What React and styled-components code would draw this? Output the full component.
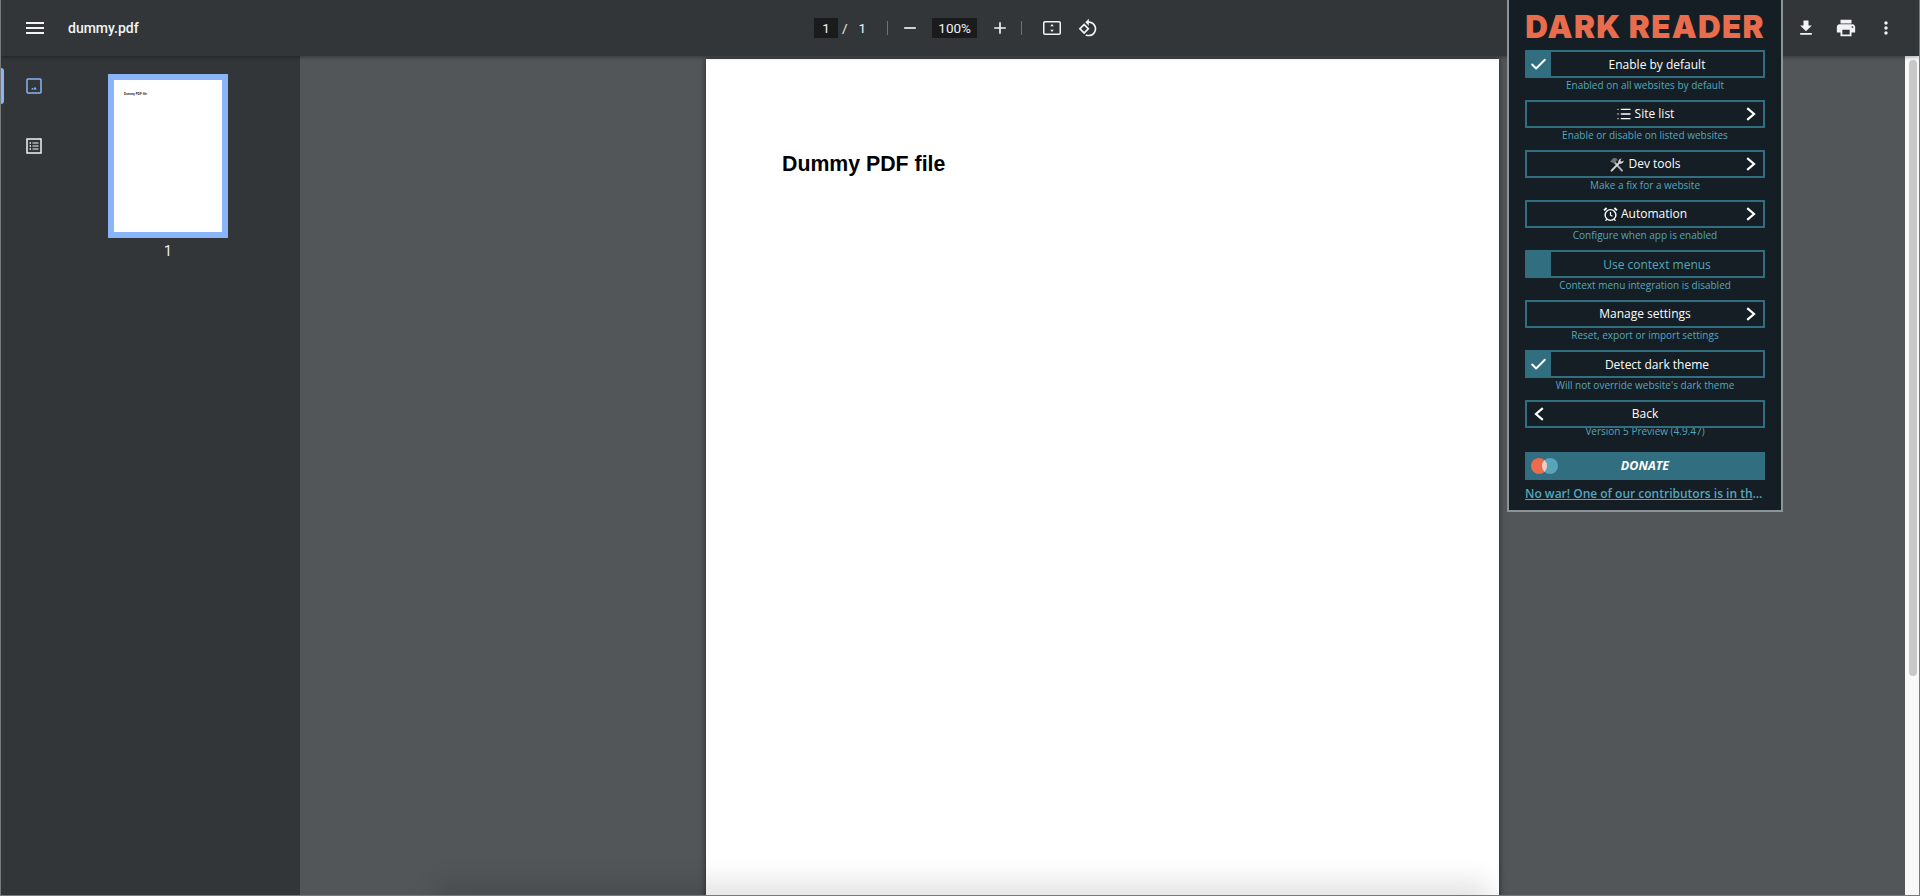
import React from "react";
import styled, { createGlobalStyle } from "styled-components";
import { Check, List } from "lucide-react";

const GlobalStyle = createGlobalStyle`
  html, body { margin: 0; padding: 0; height: 100%; overflow: hidden; background: #525659; }
  * { box-sizing: border-box; }
`;

const Frame = styled.div`
  position: relative;
  width: 1920px;
  height: 896px;
  display: flex;
  flex-direction: column;
  overflow: hidden;
  border-left: 1px solid #77797b;
  border-right: 1px solid #77797b;
  border-bottom: 1px solid #77797b;
  font-family: Roboto, "Liberation Sans", sans-serif;
  color: #f1f3f4;
`;

const Toolbar = styled.header`
  position: relative;
  z-index: 2;
  flex: 0 0 56px;
  display: grid;
  grid-template-columns: 813px auto 1fr;
  align-items: center;
  background: #323639;
  box-shadow: 0 1px 4px rgba(0, 0, 0, 0.35);
`;

const ToolbarLeft = styled.div`
  display: flex;
  align-items: center;
  padding-left: 22px;
  gap: 21px;
`;

const FileName = styled.span`
  font-size: 14px;
  font-weight: 500;
  line-height: 20px;
`;

const ToolbarCenter = styled.div`
  display: flex;
  align-items: center;
`;

const ToolbarRight = styled.div`
  display: flex;
  align-items: center;
  justify-content: flex-end;
  padding-right: 21px;
  gap: 16px;
`;

const ToolButton = styled.span`
  display: flex;
  align-items: center;
  justify-content: center;
  width: ${(p) => p.$w || 24}px;
  height: 24px;
  margin-left: ${(p) => p.$ml || 0}px;
  color: #f1f3f4;
`;

const NumberBox = styled.span`
  display: flex;
  align-items: center;
  justify-content: center;
  width: ${(p) => p.$w}px;
  height: 20px;
  margin-left: ${(p) => p.$ml || 0}px;
  background: #191b1c;
  font-size: 13.5px;
  font-weight: 400;
`;

const PageCount = styled.span`
  font-size: 13.5px;
  font-weight: 400;
  margin-left: ${(p) => p.$ml}px;
`;

const Divider = styled.span`
  width: 1px;
  height: 14px;
  margin-left: ${(p) => p.$ml}px;
  background: #6f7376;
`;

const Body = styled.div`
  flex: 1;
  display: flex;
  min-height: 0;
`;

const Sidebar = styled.aside`
  flex: 0 0 299px;
  display: flex;
  background: #323639;
`;

const SideTabs = styled.nav`
  flex: 0 0 68px;
  display: flex;
  flex-direction: column;
  padding-top: 12px;
  gap: 24px;
`;

const SideTab = styled.div`
  position: relative;
  height: 36px;
  padding-left: 25px;
  display: flex;
  align-items: center;
  color: ${(p) => (p.$active ? "#8ab4f8" : "#f1f3f4")};

  &::before {
    content: "";
    display: ${(p) => (p.$active ? "block" : "none")};
    position: absolute;
    left: 0;
    top: 0;
    width: 3px;
    height: 36px;
    border-radius: 0 3px 3px 0;
    background: #8ab4f8;
  }
`;

const ThumbColumn = styled.div`
  padding: 18px 0 0 39px;
`;

const Thumb = styled.div`
  width: 120px;
  height: 164px;
  border: 6px solid #8ab4f8;
  background: #fff;
  padding: 12px 0 0 10px;
`;

const ThumbTitle = styled.div`
  font-family: "Liberation Sans", Arial, sans-serif;
  font-size: 3px;
  font-weight: 700;
  line-height: 4px;
  color: #111;
  white-space: nowrap;
`;

const ThumbNumber = styled.div`
  width: 120px;
  margin-top: 5px;
  text-align: center;
  font-size: 14px;
  font-weight: 400;
  line-height: 16px;
`;

const Viewer = styled.main`
  position: relative;
  flex: 1;
  display: flex;
  overflow: hidden;
  background: #525659;
  padding: 3px 0 0 406px;
`;

const Sheet = styled.div`
  width: 793px;
  height: 1122px;
  flex: none;
  background: #fff;
  padding: 93px 0 0 76px;
  box-shadow: 0 0 6px rgba(0, 0, 0, 0.55);
`;

const SheetTitle = styled.h1`
  margin: 0;
  font-family: "Liberation Sans", Arial, sans-serif;
  font-size: 21.3px;
  line-height: 24px;
  font-weight: 700;
  color: #000;
`;

/* soft shadow rising from below the window edge */
const BottomFade = styled.div`
  position: absolute;
  left: 150px;
  width: 1025px;
  bottom: -14px;
  height: 14px;
  box-shadow: 0 0 26px 14px rgba(0, 0, 0, 0.11);
  pointer-events: none;
`;

const Scrollbar = styled.div`
  position: absolute;
  right: 0;
  top: 0;
  bottom: 0;
  width: 14px;
  padding: 4px 2px 0 4px;
  background: #f8f8f8;
`;

const ScrollThumb = styled.div`
  width: 100%;
  height: 616px;
  border-radius: 4px;
  background: #c8c8c8;
`;

/* Dark Reader extension popup, sits over the viewer */
const Popup = styled.section`
  position: absolute;
  z-index: 5;
  left: 1506px;
  top: -2px;
  width: 276px;
  height: 514px;
  padding: 11px 16px 0;
  background: #141e24;
  border: 2px solid #8b9496;
  font-family: "Open Sans", "Liberation Sans", sans-serif;
  display: flex;
  flex-direction: column;
`;

const Logo = styled.div`
  font-family: Inter, "Open Sans", sans-serif;
  font-weight: 900;
  font-size: 31.5px;
  line-height: 32px;
  letter-spacing: 1.25px;
  color: #e96c4c;
  white-space: nowrap;
  text-align: center;
  margin-bottom: 7px;
`;

const Row = styled.div`
  height: 50px;
  flex: none;
`;

const RowButton = styled.div`
  position: relative;
  height: 28px;
  display: flex;
  align-items: center;
  justify-content: center;
  gap: 3px;
  border: 2px solid #306e80;
  color: ${(p) => (p.$muted ? "#58a6bb" : "#fff")};
  font-size: 12px;
  line-height: 16px;
  padding-left: ${(p) => (p.$toggle ? 24 : 0)}px;
  padding-top: ${(p) => (p.$toggle ? 1 : 0)}px;
`;

const Toggle = styled.span`
  position: absolute;
  left: -2px;
  top: -2px;
  bottom: -2px;
  width: 26px;
  display: flex;
  align-items: center;
  justify-content: center;
  background: #306e80;
  color: #fff;
`;

const Arrow = styled.svg`
  position: absolute;
  top: 5px;
  ${(p) => (p.$side === "left" ? "left: 7px;" : "right: 7px;")}
`;

const Hint = styled.div`
  margin-top: 0;
  text-align: center;
  font-size: 10px;
  line-height: 14px;
  color: #58a6bb;
  white-space: nowrap;
`;

const Version = styled(Hint)`
  margin-top: -3px;
  line-height: 12px;
`;

const Donate = styled.div`
  position: relative;
  flex: none;
  margin-top: 2px;
  height: 28px;
  padding-bottom: 2px;
  display: flex;
  align-items: center;
  justify-content: center;
  background: #306e80;
  color: #fff;
  font-size: 12.5px;
  font-weight: 700;
  font-style: italic;
`;

const DonateMark = styled.svg`
  position: absolute;
  left: 6px;
  top: 6px;
`;

const NewsLink = styled.div`
  margin-top: 6px;
  font-size: 12px;
  line-height: 16px;
  font-weight: 600;
  color: #55a6bc;
  text-decoration: underline;
  white-space: nowrap;
  overflow: hidden;
  text-overflow: ellipsis;
`;

const Icon = ({ d, size = 24 }) => (
  <svg width={size} height={size} viewBox="0 0 24 24" fill="currentColor">
    <path d={d} />
  </svg>
);

const paths = {
  menu: "M3 18h18v-2H3v2zm0-5h18v-2H3v2zm0-7v2h18V6H3z",
  minus: "M5 11h14v2H5z",
  plus: "M19 13h-6v6h-2v-6H5v-2h6V5h2v6h6v2z",
  rotate:
    "M7.34 6.41L.86 12.9l6.49 6.48 6.49-6.48-6.5-6.49zM3.69 12.9l3.66-3.66L11 12.9l-3.66 3.66-3.65-3.66zm15.67-6.26C17.61 4.88 15.3 4 13 4V.76L8.76 5 13 9.24V6c1.79 0 3.58.68 4.95 2.05 2.73 2.73 2.73 7.17 0 9.9C16.58 19.32 14.79 20 13 20c-.97 0-1.94-.21-2.84-.61l-1.49 1.49C10.02 21.62 11.51 22 13 22c2.3 0 4.61-.88 6.36-2.64 3.52-3.51 3.52-9.21 0-12.72z",
  download: "M19 9h-4V3H9v6H5l7 7 7-7zM5 18v2h14v-2H5z",
  print:
    "M19 8H5c-1.66 0-3 1.34-3 3v6h4v4h12v-4h4v-6c0-1.66-1.34-3-3-3zm-3 11H8v-5h8v5zm3-7c-.55 0-1-.45-1-1s.45-1 1-1 1 .45 1 1-.45 1-1 1zm-1-9H6v4h12V3z",
  more:
    "M12 8c1.1 0 2-.9 2-2s-.9-2-2-2-2 .9-2 2 .9 2 2 2zm0 2c-1.1 0-2 .9-2 2s.9 2 2 2 2-.9 2-2-.9-2-2-2zm0 6c-1.1 0-2 .9-2 2s.9 2 2 2 2-.9 2-2-.9-2-2-2z",
};

const FitIcon = () => (
  <svg width="24" height="24" viewBox="0 0 24 24" fill="none">
    <rect x="3.75" y="5.75" width="16.5" height="12.5" rx="1.2" stroke="currentColor" strokeWidth="1.5" />
    <path d="M12 8l1.8 2.2h-3.6zM12 16l1.8-2.2h-3.6z" fill="currentColor" />
  </svg>
);

const ThumbsIcon = () => (
  <svg width="16" height="16" viewBox="0 0 16 16" fill="none">
    <rect x="1" y="1" width="14" height="14" rx="1" stroke="currentColor" strokeWidth="1.5" />
    <path d="M5 11.5l1.4-1.8 1.2 1.2 1.4-2.1 1.8 2.7z" fill="currentColor" />
  </svg>
);

const OutlineIcon = () => (
  <svg width="16" height="16" viewBox="0 0 16 16" fill="none">
    <rect x="1" y="1" width="14" height="14" stroke="currentColor" strokeWidth="1.5" />
    <path d="M6.5 5h6M6.5 8h6M6.5 11h6" stroke="currentColor" strokeWidth="1.2" />
    <path d="M3.6 5h1.4M3.6 8h1.4M3.6 11h1.4" stroke="currentColor" strokeWidth="1.4" />
  </svg>
);

const ToolsIcon = () => (
  <svg width="16" height="15" viewBox="0 0 16 15" fill="none">
    <path d="M13 13.6L5.2 4.8" stroke="#b5b5b5" strokeWidth="2" strokeLinecap="round" />
    <path d="M1 4.6L4.8.8l3 .7 1 2-1.6.3-1.6 3z" fill="#6f7275" />
    <path d="M2.6 13.6l8-8.2" stroke="#d8d8d8" strokeWidth="2" strokeLinecap="round" />
    <path d="M9.7 6.3c-1-2 .3-4.7 3-4.8l-1.4 2 1.2 1.3 2.2-1.2c0 2.6-2.5 4.1-5 2.7z" fill="#d8d8d8" />
  </svg>
);

const ClockIcon = () => (
  <svg width="15" height="16" viewBox="0 0 15 16" fill="none" stroke="#fff">
    <circle cx="7.5" cy="9" r="5.4" strokeWidth="1.4" />
    <path d="M7.5 6v3.2l2 1" strokeWidth="1.2" />
    <path d="M1 4.4L3.6 2M14 4.4L11.4 2" strokeWidth="1.8" />
    <path d="M3.8 13.2l-1.2 1.6M11.2 13.2l1.2 1.6" strokeWidth="1.2" />
  </svg>
);

const NextArrow = () => (
  <Arrow width="10" height="14" viewBox="0 0 10 14" fill="none" stroke="#fff" strokeWidth="2.2">
    <path d="M1.2 1.2L8 7l-6.8 5.8" />
  </Arrow>
);

const BackArrow = () => (
  <Arrow $side="left" width="10" height="14" viewBox="0 0 10 14" fill="none" stroke="#fff" strokeWidth="2.2">
    <path d="M8.8 1.2L2 7l6.8 5.8" />
  </Arrow>
);

const App = () => (
  <Frame>
    <GlobalStyle />
    <Toolbar>
      <ToolbarLeft>
        <ToolButton><Icon d={paths.menu} /></ToolButton>
        <FileName>dummy.pdf</FileName>
      </ToolbarLeft>
      <ToolbarCenter>
        <NumberBox $w={24}>1</NumberBox>
        <PageCount $ml={4}>/</PageCount>
        <PageCount $ml={11}>1</PageCount>
        <Divider $ml={21} />
        <ToolButton $ml={10}><Icon d={paths.minus} size={20} /></ToolButton>
        <NumberBox $w={45} $ml={10}>100%</NumberBox>
        <ToolButton $ml={11}><Icon d={paths.plus} size={20} /></ToolButton>
        <Divider $ml={9} />
        <ToolButton $ml={18}><FitIcon /></ToolButton>
        <ToolButton $ml={12}><Icon d={paths.rotate} size={20} /></ToolButton>
      </ToolbarCenter>
      <ToolbarRight>
        <ToolButton><Icon d={paths.download} size={20} /></ToolButton>
        <ToolButton><Icon d={paths.print} size={22} /></ToolButton>
        <ToolButton><Icon d={paths.more} size={20} /></ToolButton>
      </ToolbarRight>
    </Toolbar>
    <Body>
      <Sidebar>
        <SideTabs>
          <SideTab $active><ThumbsIcon /></SideTab>
          <SideTab><OutlineIcon /></SideTab>
        </SideTabs>
        <ThumbColumn>
          <Thumb><ThumbTitle>Dummy PDF file</ThumbTitle></Thumb>
          <ThumbNumber>1</ThumbNumber>
        </ThumbColumn>
      </Sidebar>
      <Viewer>
        <Sheet><SheetTitle>Dummy PDF file</SheetTitle></Sheet>
        <BottomFade />
        <Scrollbar><ScrollThumb /></Scrollbar>
      </Viewer>
    </Body>
    <Popup>
      <Logo>DARK READER</Logo>
      <Row>
        <RowButton $toggle>
          <Toggle><Check size={19} strokeWidth={2.4} /></Toggle>
          Enable by default
        </RowButton>
        <Hint>Enabled on all websites by default</Hint>
      </Row>
      <Row>
        <RowButton>
          <List size={16} />Site list
          <NextArrow />
        </RowButton>
        <Hint>Enable or disable on listed websites</Hint>
      </Row>
      <Row>
        <RowButton>
          <ToolsIcon />Dev tools
          <NextArrow />
        </RowButton>
        <Hint>Make a fix for a website</Hint>
      </Row>
      <Row>
        <RowButton>
          <ClockIcon />Automation
          <NextArrow />
        </RowButton>
        <Hint>Configure when app is enabled</Hint>
      </Row>
      <Row>
        <RowButton $toggle $muted>
          <Toggle />
          Use context menus
        </RowButton>
        <Hint>Context menu integration is disabled</Hint>
      </Row>
      <Row>
        <RowButton>
          Manage settings
          <NextArrow />
        </RowButton>
        <Hint>Reset, export or import settings</Hint>
      </Row>
      <Row>
        <RowButton $toggle>
          <Toggle><Check size={19} strokeWidth={2.4} /></Toggle>
          Detect dark theme
        </RowButton>
        <Hint>Will not override website's dark theme</Hint>
      </Row>
      <Row>
        <RowButton>
          <BackArrow />
          Back
        </RowButton>
        <Version>Version 5 Preview (4.9.47)</Version>
      </Row>
      <Donate>
        <DonateMark width="27" height="16" viewBox="0 0 27 16">
          <circle cx="8" cy="8" r="8" fill="#ec6b4c" />
          <circle cx="19" cy="8" r="8" fill="#56a5bb" />
          <path d="M13.5 2.1a8 8 0 0 1 0 11.8a8 8 0 0 1 0-11.8z" fill="#f3c9c0" />
        </DonateMark>
        DONATE
      </Donate>
      <NewsLink>No war! One of our contributors is in the Ukraine</NewsLink>
    </Popup>
  </Frame>
);

export default App;
